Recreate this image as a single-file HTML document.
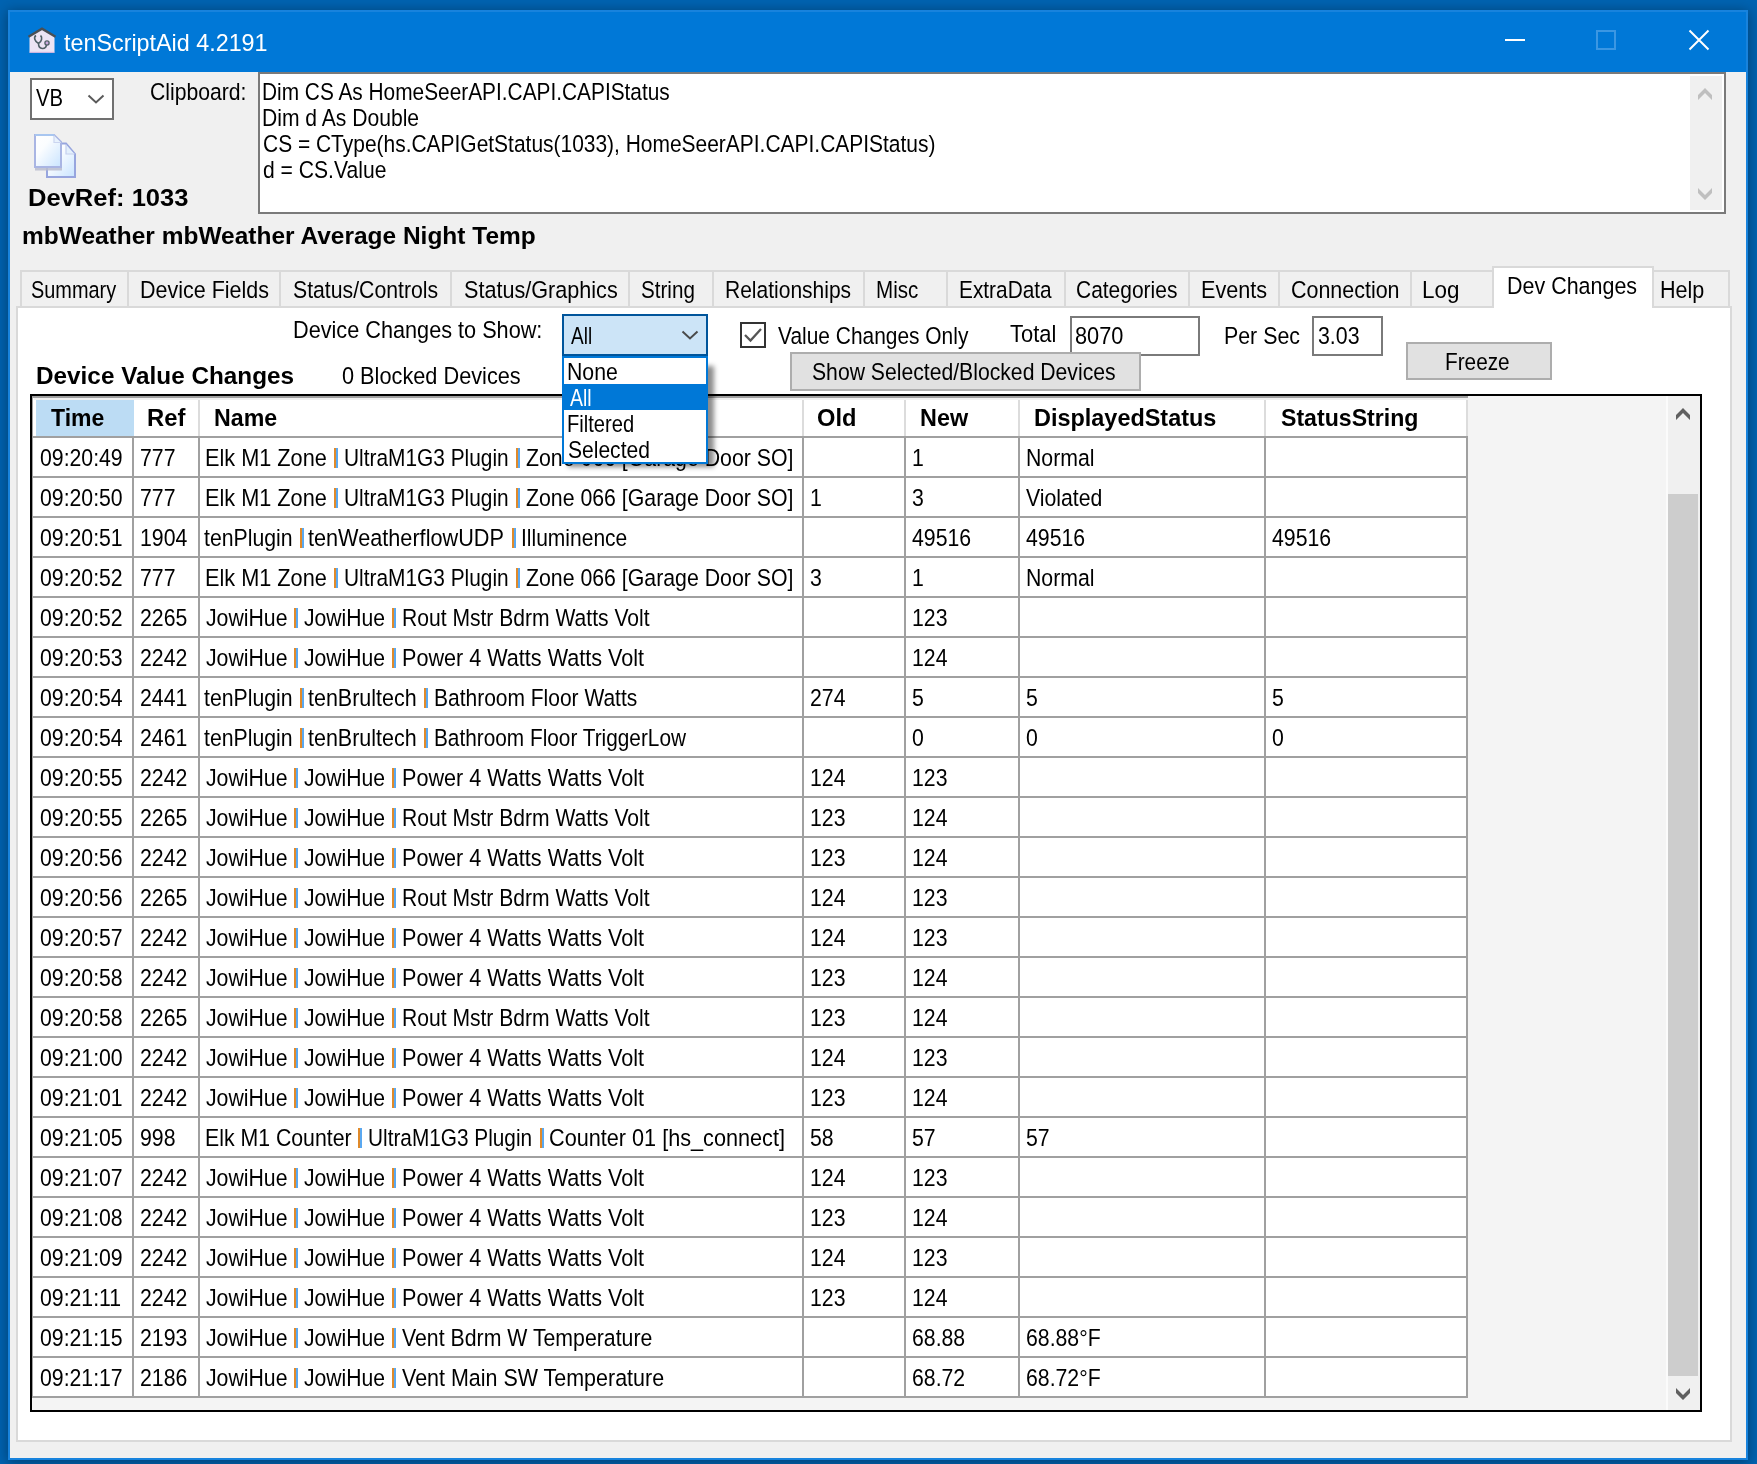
<!DOCTYPE html>
<html><head><meta charset="utf-8"><title>tenScriptAid</title>
<style>
html,body{margin:0;padding:0}
body{width:1757px;height:1464px;overflow:hidden;position:relative;background:#005a9e;font-family:"Liberation Sans",sans-serif;}
div,span,svg{position:absolute;box-sizing:border-box}
.t{white-space:nowrap;font-size:24.5px;line-height:24.5px;transform-origin:0 0;color:#000}
.b{font-weight:bold}
.t i{display:inline-block;position:relative;width:6.7px;height:20px;vertical-align:-2px;background:linear-gradient(90deg,transparent 0,transparent 1.2px,#e08a2a 1.2px,#e08a2a 3.5px,#5aa8f0 3.5px,#5aa8f0 5.8px,transparent 5.8px)}
.pp{width:4px;height:20px;background:linear-gradient(90deg,#e08a2a 0,#e08a2a 2px,#5aa8f0 2px,#5aa8f0 4px)}
.gl{background:#a0a0a0}
.btn{background:#e1e1e1;border:2px solid #adadad}
.tb{background:#fff;border:2px solid #7a7a7a}
.ts{background:#d9d9d9}
</style></head><body>
<!-- desktop shading -->
<div style="left:0;top:0;width:1757px;height:1464px;background:#0063b1"></div>
<!-- window -->
<div style="left:8px;top:10px;width:1740px;height:1450px;background:#0078d7;border:2px solid #1883dd;box-shadow:0 2px 12px 1px rgba(0,0,0,.34)"></div>
<div style="left:10px;top:12px;width:1736px;height:60px;background:#0078d7"></div>
<div style="left:10px;top:72px;width:1736px;height:1386px;background:#f0f0f0"></div>
<!-- title icon -->
<svg style="left:27px;top:27px" width="30" height="27" viewBox="0 0 30 27">
<path d="M2.5 9.5 L15 2 L27.5 9.5 L27.5 25.5 L2.5 25.5 Z" fill="#ece4f4"/>
<path d="M1.5 9.8 L15 1.6 L28.5 9.8" fill="none" stroke="#4a4f54" stroke-width="2.4"/>
<path d="M9 8.5 C6.5 10 7.5 14.5 11.5 16.5 C15 14.5 15.5 10 13.5 8.5 M11.5 16.5 C11.5 23 19 23 19.5 17.5" fill="none" stroke="#4f5f66" stroke-width="1.6"/>
<circle cx="20" cy="16" r="2.1" fill="#c9a8dd" stroke="#4f5f66" stroke-width="1.3"/>
<rect x="2.5" y="24.8" width="25" height="1" fill="#e0b8e0"/>
</svg>
<!-- caption buttons -->
<div style="left:1505px;top:39px;width:20px;height:2px;background:#fff"></div>
<div style="left:1596px;top:30px;width:20px;height:20px;border:2px solid #3b97e3"></div>
<svg style="left:1688px;top:29px" width="22" height="22" viewBox="0 0 22 22"><path d="M1.5 1.5 L20.5 20.5 M20.5 1.5 L1.5 20.5" stroke="#fff" stroke-width="2" fill="none"/></svg>

<!-- VB combo -->
<div class="tb" style="left:30px;top:78px;width:84px;height:42px;border-color:#707070"></div>
<svg style="left:86px;top:93px" width="20" height="12" viewBox="0 0 20 12"><path d="M2.5 2.5 L10 9.5 L17.5 2.5" stroke="#5a5a5a" stroke-width="2" fill="none"/></svg>
<!-- copy icon -->
<svg style="left:32px;top:132px" width="46" height="48" viewBox="0 0 46 48">
<defs><linearGradient id="pg" x1="0" y1="0" x2="1" y2="1"><stop offset="0" stop-color="#ffffff"/><stop offset=".35" stop-color="#fbfdff"/><stop offset="1" stop-color="#c9e4ff"/></linearGradient></defs>
<path d="M15 11.5 H34 L43 22 V45 H15 Z" fill="url(#pg)" stroke="#97a5de" stroke-width="2"/>
<path d="M34 12.5 V22 H42.5" fill="#e4f0fc" stroke="#c5d0ee" stroke-width="1.2"/>
<rect x="3" y="36" width="27" height="2.5" fill="#b9bccf" opacity=".85"/>
<path d="M3 3 H22 L29 10 V35 H3 Z" fill="url(#pg)" stroke="#a9b5e3" stroke-width="2"/>
<path d="M22 3.5 V10.5 H29" fill="#e8f2fd" stroke="#cbd5f0" stroke-width="1.2"/>
<path d="M3 3 H22" stroke="#a8c6f0" stroke-width="2"/>
</svg>
<!-- clipboard textbox -->
<div class="tb" style="left:258px;top:72px;width:1468px;height:142px"></div>
<div style="left:1690px;top:76px;width:32px;height:134px;background:#f0f0f0"></div>
<svg style="left:1698px;top:88px" width="14" height="12" viewBox="0 0 14 12"><path d="M7 0 L14 7 L14 12 L7 5 L0 12 L0 7 Z" fill="#bfbfbf"/></svg>
<svg style="left:1698px;top:188px" width="14" height="12" viewBox="0 0 14 12"><path d="M7 12 L14 5 L14 0 L7 7 L0 0 L0 5 Z" fill="#bfbfbf"/></svg>

<!-- tab page -->
<div style="left:16px;top:306px;width:1716px;height:1136px;background:#fff;border:2px solid #d9d9d9"></div>
<!-- tab strip -->
<div class="ts" style="left:20px;top:270px;width:1472px;height:2px"></div>
<div class="ts" style="left:1654px;top:270px;width:76px;height:2px"></div>
<div class="ts" style="left:20px;top:270px;width:2px;height:36px"></div>
<div class="ts" style="left:127px;top:270px;width:2px;height:36px"></div>
<div class="ts" style="left:279px;top:270px;width:2px;height:36px"></div>
<div class="ts" style="left:450px;top:270px;width:2px;height:36px"></div>
<div class="ts" style="left:628px;top:270px;width:2px;height:36px"></div>
<div class="ts" style="left:712px;top:270px;width:2px;height:36px"></div>
<div class="ts" style="left:863px;top:270px;width:2px;height:36px"></div>
<div class="ts" style="left:946px;top:270px;width:2px;height:36px"></div>
<div class="ts" style="left:1064px;top:270px;width:2px;height:36px"></div>
<div class="ts" style="left:1188px;top:270px;width:2px;height:36px"></div>
<div class="ts" style="left:1278px;top:270px;width:2px;height:36px"></div>
<div class="ts" style="left:1410px;top:270px;width:2px;height:36px"></div>
<div class="ts" style="left:1728px;top:270px;width:2px;height:36px"></div>
<!-- selected tab -->
<div style="left:1492px;top:266px;width:162px;height:42px;background:#fff;border:2px solid #d9d9d9;border-bottom:none"></div>

<!-- combobox (open) -->
<div style="left:562px;top:314px;width:146px;height:42px;background:#cce4f7;border:2px solid #00559b"></div>
<svg style="left:680px;top:329px" width="20" height="12" viewBox="0 0 20 12"><path d="M2.5 2.5 L10 9.5 L17.5 2.5" stroke="#4a4a4a" stroke-width="2" fill="none"/></svg>
<!-- checkbox -->
<div style="left:740px;top:322px;width:26px;height:26px;background:#fff;border:2px solid #333"></div>
<svg style="left:740px;top:322px" width="26" height="26" viewBox="0 0 26 26"><path d="M5 13 L10.5 18.5 L21 7" stroke="#555" stroke-width="2.3" fill="none"/></svg>
<!-- textboxes -->
<div class="tb" style="left:1070px;top:316px;width:130px;height:40px"></div>
<div class="tb" style="left:1312px;top:316px;width:71px;height:40px"></div>
<!-- buttons -->
<div class="btn" style="left:790px;top:352px;width:351px;height:39px"></div>
<div class="btn" style="left:1406px;top:342px;width:146px;height:38px"></div>

<!-- grid -->
<div style="left:30px;top:394px;width:1672px;height:1018px;background:#f4f4f4;border:2px solid #000"></div>
<div style="left:32px;top:396px;width:1436px;height:2px;background:#a0a0a0"></div>
<div style="left:32px;top:396px;width:2px;height:1002px;background:#a0a0a0"></div>
<div style="position:absolute;left:33px;top:398px;width:1434px;height:999px;background:#fff"></div>
<div style="position:absolute;left:34px;top:398px;width:1434px;height:2px;background:#f0f0f0"></div>
<div style="position:absolute;left:132px;top:400px;width:2px;height:36px;background:#dcdcdc"></div>
<div style="position:absolute;left:198px;top:400px;width:2px;height:36px;background:#dcdcdc"></div>
<div style="position:absolute;left:802px;top:400px;width:2px;height:36px;background:#dcdcdc"></div>
<div style="position:absolute;left:904px;top:400px;width:2px;height:36px;background:#dcdcdc"></div>
<div style="position:absolute;left:1018px;top:400px;width:2px;height:36px;background:#dcdcdc"></div>
<div style="position:absolute;left:1264px;top:400px;width:2px;height:36px;background:#dcdcdc"></div>
<div style="position:absolute;left:1466px;top:400px;width:2px;height:36px;background:#dcdcdc"></div>
<div style="position:absolute;left:36px;top:400px;width:98px;height:36px;background:#bcdcf4"></div>
<div class="gl" style="left:33px;top:436px;width:1435px;height:2px"></div>
<div class="gl" style="left:33px;top:476px;width:1435px;height:2px"></div>
<div class="gl" style="left:33px;top:516px;width:1435px;height:2px"></div>
<div class="gl" style="left:33px;top:556px;width:1435px;height:2px"></div>
<div class="gl" style="left:33px;top:596px;width:1435px;height:2px"></div>
<div class="gl" style="left:33px;top:636px;width:1435px;height:2px"></div>
<div class="gl" style="left:33px;top:676px;width:1435px;height:2px"></div>
<div class="gl" style="left:33px;top:716px;width:1435px;height:2px"></div>
<div class="gl" style="left:33px;top:756px;width:1435px;height:2px"></div>
<div class="gl" style="left:33px;top:796px;width:1435px;height:2px"></div>
<div class="gl" style="left:33px;top:836px;width:1435px;height:2px"></div>
<div class="gl" style="left:33px;top:876px;width:1435px;height:2px"></div>
<div class="gl" style="left:33px;top:916px;width:1435px;height:2px"></div>
<div class="gl" style="left:33px;top:956px;width:1435px;height:2px"></div>
<div class="gl" style="left:33px;top:996px;width:1435px;height:2px"></div>
<div class="gl" style="left:33px;top:1036px;width:1435px;height:2px"></div>
<div class="gl" style="left:33px;top:1076px;width:1435px;height:2px"></div>
<div class="gl" style="left:33px;top:1116px;width:1435px;height:2px"></div>
<div class="gl" style="left:33px;top:1156px;width:1435px;height:2px"></div>
<div class="gl" style="left:33px;top:1196px;width:1435px;height:2px"></div>
<div class="gl" style="left:33px;top:1236px;width:1435px;height:2px"></div>
<div class="gl" style="left:33px;top:1276px;width:1435px;height:2px"></div>
<div class="gl" style="left:33px;top:1316px;width:1435px;height:2px"></div>
<div class="gl" style="left:33px;top:1356px;width:1435px;height:2px"></div>
<div class="gl" style="left:33px;top:1396px;width:1435px;height:2px"></div>
<div class="gl" style="left:132px;top:436px;width:2px;height:962px"></div>
<div class="gl" style="left:198px;top:436px;width:2px;height:962px"></div>
<div class="gl" style="left:802px;top:436px;width:2px;height:962px"></div>
<div class="gl" style="left:904px;top:436px;width:2px;height:962px"></div>
<div class="gl" style="left:1018px;top:436px;width:2px;height:962px"></div>
<div class="gl" style="left:1264px;top:436px;width:2px;height:962px"></div>
<div class="gl" style="left:1466px;top:436px;width:2px;height:962px"></div>
<!-- grid scrollbar -->
<div style="left:1666px;top:396px;width:2px;height:1014px;background:#fbfbfb"></div>
<div style="left:1668px;top:396px;width:32px;height:1014px;background:#f0f0f0"></div>
<div style="left:1668px;top:494px;width:30px;height:882px;background:#cdcdcd"></div>
<svg style="left:1676px;top:408px" width="14" height="12" viewBox="0 0 14 12"><path d="M7 0 L14 7 L14 12 L7 5 L0 12 L0 7 Z" fill="#606060"/></svg>
<svg style="left:1676px;top:1388px" width="14" height="12" viewBox="0 0 14 12"><path d="M7 12 L14 5 L14 0 L7 7 L0 0 L0 5 Z" fill="#606060"/></svg>

<span class="t" style="left:63.80px;top:31.08px;transform:scaleX(0.9717);color:#fff;font-size:24px;line-height:24px;">tenScriptAid 4.2191</span>
<span class="t" style="left:35.75px;top:85.86px;transform:scaleX(0.8271);">VB</span>
<span class="t" style="left:150.14px;top:79.86px;transform:scaleX(0.8634);">Clipboard:</span>
<span class="t" style="left:262.30px;top:79.86px;transform:scaleX(0.8508);">Dim CS As HomeSeerAPI.CAPI.CAPIStatus</span>
<span class="t" style="left:262.28px;top:105.86px;transform:scaleX(0.8609);">Dim d As Double</span>
<span class="t" style="left:263.14px;top:131.86px;transform:scaleX(0.8551);">CS = CType(hs.CAPIGetStatus(1033), HomeSeerAPI.CAPI.CAPIStatus)</span>
<span class="t" style="left:263.14px;top:157.86px;transform:scaleX(0.8615);">d = CS.Value</span>
<span class="t b" style="left:27.66px;top:185.86px;transform:scaleX(1.0429);">DevRef: 1033</span>
<span class="t b" style="left:22.30px;top:223.86px;transform:scaleX(0.9992);">mbWeather mbWeather Average Night Temp</span>
<span class="t" style="left:31.19px;top:277.86px;transform:scaleX(0.8129);">Summary</span>
<span class="t" style="left:140.25px;top:277.86px;transform:scaleX(0.8771);">Device Fields</span>
<span class="t" style="left:293.13px;top:277.86px;transform:scaleX(0.8662);">Status/Controls</span>
<span class="t" style="left:463.52px;top:277.86px;transform:scaleX(0.8818);">Status/Graphics</span>
<span class="t" style="left:641.16px;top:277.86px;transform:scaleX(0.8417);">String</span>
<span class="t" style="left:725.08px;top:277.86px;transform:scaleX(0.8575);">Relationships</span>
<span class="t" style="left:875.92px;top:277.86px;transform:scaleX(0.8399);">Misc</span>
<span class="t" style="left:959.00px;top:277.86px;transform:scaleX(0.8508);">ExtraData</span>
<span class="t" style="left:1076.14px;top:277.86px;transform:scaleX(0.8556);">Categories</span>
<span class="t" style="left:1200.53px;top:277.86px;transform:scaleX(0.8837);">Events</span>
<span class="t" style="left:1290.62px;top:277.86px;transform:scaleX(0.8756);">Connection</span>
<span class="t" style="left:1422.17px;top:277.86px;transform:scaleX(0.9150);">Log</span>
<span class="t" style="left:1660.24px;top:277.86px;transform:scaleX(0.8794);">Help</span>
<span class="t" style="left:1506.95px;top:273.86px;transform:scaleX(0.8762);">Dev Changes</span>
<span class="t" style="left:293.23px;top:317.86px;transform:scaleX(0.8846);">Device Changes to Show:</span>
<span class="t" style="left:570.50px;top:323.86px;transform:scaleX(0.7757);">All</span>
<span class="t" style="left:778.00px;top:323.86px;transform:scaleX(0.8540);">Value Changes Only</span>
<span class="t" style="left:1010.00px;top:321.86px;transform:scaleX(0.8945);">Total</span>
<span class="t" style="left:1075.11px;top:323.86px;transform:scaleX(0.8889);">8070</span>
<span class="t" style="left:1224.26px;top:323.86px;transform:scaleX(0.8716);">Per Sec</span>
<span class="t" style="left:1318.00px;top:323.86px;transform:scaleX(0.8713);">3.03</span>
<span class="t" style="left:811.64px;top:359.86px;transform:scaleX(0.8640);">Show Selected/Blocked Devices</span>
<span class="t" style="left:1444.60px;top:349.86px;transform:scaleX(0.8475);">Freeze</span>
<span class="t" style="left:342.00px;top:363.86px;transform:scaleX(0.8868);">0 Blocked Devices</span>
<span class="t b" style="left:36.01px;top:363.86px;transform:scaleX(0.9924);">Device Value Changes</span>
<span class="t b" style="left:51.30px;top:405.86px;transform:scaleX(0.9392);">Time</span>
<span class="t b" style="left:147.43px;top:405.86px;transform:scaleX(0.9715);">Ref</span>
<span class="t b" style="left:214.45px;top:405.86px;transform:scaleX(0.9462);">Name</span>
<span class="t b" style="left:816.54px;top:405.86px;transform:scaleX(0.9649);">Old</span>
<span class="t b" style="left:920.05px;top:405.86px;transform:scaleX(0.9539);">New</span>
<span class="t b" style="left:1034.04px;top:405.86px;transform:scaleX(0.9567);">DisplayedStatus</span>
<span class="t b" style="left:1280.50px;top:405.86px;transform:scaleX(0.9434);">StatusString</span>
<span class="t" style="left:40.00px;top:445.86px;transform:scaleX(0.8670);">09:20:49</span>
<span class="t" style="left:139.50px;top:445.86px;transform:scaleX(0.8670);">777</span>
<span class="t" style="left:205.23px;top:445.86px;transform:scaleX(0.8858);">Elk M1 Zone</span>
<span class="t" style="left:344.35px;top:445.86px;transform:scaleX(0.8517);">UltraM1G3 Plugin</span>
<span class="t" style="left:526.30px;top:445.86px;transform:scaleX(0.8688);">Zone 066 [Garage Door SO]</span>
<span class="t" style="left:911.50px;top:445.86px;transform:scaleX(0.8670);">1</span>
<span class="t" style="left:1025.50px;top:445.86px;transform:scaleX(0.8670);">Normal</span>
<span class="t" style="left:40.00px;top:485.86px;transform:scaleX(0.8670);">09:20:50</span>
<span class="t" style="left:139.50px;top:485.86px;transform:scaleX(0.8670);">777</span>
<span class="t" style="left:205.23px;top:485.86px;transform:scaleX(0.8858);">Elk M1 Zone</span>
<span class="t" style="left:344.35px;top:485.86px;transform:scaleX(0.8517);">UltraM1G3 Plugin</span>
<span class="t" style="left:526.30px;top:485.86px;transform:scaleX(0.8688);">Zone 066 [Garage Door SO]</span>
<span class="t" style="left:809.50px;top:485.86px;transform:scaleX(0.8670);">1</span>
<span class="t" style="left:911.50px;top:485.86px;transform:scaleX(0.8670);">3</span>
<span class="t" style="left:1025.50px;top:485.86px;transform:scaleX(0.8670);">Violated</span>
<span class="t" style="left:40.00px;top:525.86px;transform:scaleX(0.8670);">09:20:51</span>
<span class="t" style="left:139.50px;top:525.86px;transform:scaleX(0.8670);">1904</span>
<span class="t" style="left:204.20px;top:525.86px;transform:scaleX(0.8667);">tenPlugin</span>
<span class="t" style="left:307.80px;top:525.86px;transform:scaleX(0.8844);">tenWeatherflowUDP</span>
<span class="t" style="left:520.79px;top:525.86px;transform:scaleX(0.8574);">Illuminence</span>
<span class="t" style="left:911.50px;top:525.86px;transform:scaleX(0.8670);">49516</span>
<span class="t" style="left:1025.50px;top:525.86px;transform:scaleX(0.8670);">49516</span>
<span class="t" style="left:1271.50px;top:525.86px;transform:scaleX(0.8670);">49516</span>
<span class="t" style="left:40.00px;top:565.86px;transform:scaleX(0.8670);">09:20:52</span>
<span class="t" style="left:139.50px;top:565.86px;transform:scaleX(0.8670);">777</span>
<span class="t" style="left:205.23px;top:565.86px;transform:scaleX(0.8858);">Elk M1 Zone</span>
<span class="t" style="left:344.35px;top:565.86px;transform:scaleX(0.8517);">UltraM1G3 Plugin</span>
<span class="t" style="left:526.30px;top:565.86px;transform:scaleX(0.8688);">Zone 066 [Garage Door SO]</span>
<span class="t" style="left:809.50px;top:565.86px;transform:scaleX(0.8670);">3</span>
<span class="t" style="left:911.50px;top:565.86px;transform:scaleX(0.8670);">1</span>
<span class="t" style="left:1025.50px;top:565.86px;transform:scaleX(0.8670);">Normal</span>
<span class="t" style="left:40.00px;top:605.86px;transform:scaleX(0.8670);">09:20:52</span>
<span class="t" style="left:139.50px;top:605.86px;transform:scaleX(0.8670);">2265</span>
<span class="t" style="left:205.50px;top:605.86px;transform:scaleX(0.8668);">JowiHue</span>
<span class="t" style="left:303.50px;top:605.86px;transform:scaleX(0.8625);">JowiHue</span>
<span class="t" style="left:402.48px;top:605.86px;transform:scaleX(0.8604);">Rout Mstr Bdrm Watts Volt</span>
<span class="t" style="left:911.50px;top:605.86px;transform:scaleX(0.8670);">123</span>
<span class="t" style="left:40.00px;top:645.86px;transform:scaleX(0.8670);">09:20:53</span>
<span class="t" style="left:139.50px;top:645.86px;transform:scaleX(0.8670);">2242</span>
<span class="t" style="left:205.50px;top:645.86px;transform:scaleX(0.8668);">JowiHue</span>
<span class="t" style="left:303.50px;top:645.86px;transform:scaleX(0.8625);">JowiHue</span>
<span class="t" style="left:401.74px;top:645.86px;transform:scaleX(0.8817);">Power 4 Watts Watts Volt</span>
<span class="t" style="left:911.50px;top:645.86px;transform:scaleX(0.8670);">124</span>
<span class="t" style="left:40.00px;top:685.86px;transform:scaleX(0.8670);">09:20:54</span>
<span class="t" style="left:139.50px;top:685.86px;transform:scaleX(0.8670);">2441</span>
<span class="t" style="left:204.20px;top:685.86px;transform:scaleX(0.8667);">tenPlugin</span>
<span class="t" style="left:307.80px;top:685.86px;transform:scaleX(0.8767);">tenBrultech</span>
<span class="t" style="left:433.99px;top:685.86px;transform:scaleX(0.8562);">Bathroom Floor Watts</span>
<span class="t" style="left:809.50px;top:685.86px;transform:scaleX(0.8670);">274</span>
<span class="t" style="left:911.50px;top:685.86px;transform:scaleX(0.8670);">5</span>
<span class="t" style="left:1025.50px;top:685.86px;transform:scaleX(0.8670);">5</span>
<span class="t" style="left:1271.50px;top:685.86px;transform:scaleX(0.8670);">5</span>
<span class="t" style="left:40.00px;top:725.86px;transform:scaleX(0.8670);">09:20:54</span>
<span class="t" style="left:139.50px;top:725.86px;transform:scaleX(0.8670);">2461</span>
<span class="t" style="left:204.20px;top:725.86px;transform:scaleX(0.8667);">tenPlugin</span>
<span class="t" style="left:307.80px;top:725.86px;transform:scaleX(0.8767);">tenBrultech</span>
<span class="t" style="left:434.00px;top:725.86px;transform:scaleX(0.8488);">Bathroom Floor TriggerLow</span>
<span class="t" style="left:911.50px;top:725.86px;transform:scaleX(0.8670);">0</span>
<span class="t" style="left:1025.50px;top:725.86px;transform:scaleX(0.8670);">0</span>
<span class="t" style="left:1271.50px;top:725.86px;transform:scaleX(0.8670);">0</span>
<span class="t" style="left:40.00px;top:765.86px;transform:scaleX(0.8670);">09:20:55</span>
<span class="t" style="left:139.50px;top:765.86px;transform:scaleX(0.8670);">2242</span>
<span class="t" style="left:205.50px;top:765.86px;transform:scaleX(0.8668);">JowiHue</span>
<span class="t" style="left:303.50px;top:765.86px;transform:scaleX(0.8625);">JowiHue</span>
<span class="t" style="left:401.74px;top:765.86px;transform:scaleX(0.8817);">Power 4 Watts Watts Volt</span>
<span class="t" style="left:809.50px;top:765.86px;transform:scaleX(0.8670);">124</span>
<span class="t" style="left:911.50px;top:765.86px;transform:scaleX(0.8670);">123</span>
<span class="t" style="left:40.00px;top:805.86px;transform:scaleX(0.8670);">09:20:55</span>
<span class="t" style="left:139.50px;top:805.86px;transform:scaleX(0.8670);">2265</span>
<span class="t" style="left:205.50px;top:805.86px;transform:scaleX(0.8668);">JowiHue</span>
<span class="t" style="left:303.50px;top:805.86px;transform:scaleX(0.8625);">JowiHue</span>
<span class="t" style="left:402.48px;top:805.86px;transform:scaleX(0.8604);">Rout Mstr Bdrm Watts Volt</span>
<span class="t" style="left:809.50px;top:805.86px;transform:scaleX(0.8670);">123</span>
<span class="t" style="left:911.50px;top:805.86px;transform:scaleX(0.8670);">124</span>
<span class="t" style="left:40.00px;top:845.86px;transform:scaleX(0.8670);">09:20:56</span>
<span class="t" style="left:139.50px;top:845.86px;transform:scaleX(0.8670);">2242</span>
<span class="t" style="left:205.50px;top:845.86px;transform:scaleX(0.8668);">JowiHue</span>
<span class="t" style="left:303.50px;top:845.86px;transform:scaleX(0.8625);">JowiHue</span>
<span class="t" style="left:401.74px;top:845.86px;transform:scaleX(0.8817);">Power 4 Watts Watts Volt</span>
<span class="t" style="left:809.50px;top:845.86px;transform:scaleX(0.8670);">123</span>
<span class="t" style="left:911.50px;top:845.86px;transform:scaleX(0.8670);">124</span>
<span class="t" style="left:40.00px;top:885.86px;transform:scaleX(0.8670);">09:20:56</span>
<span class="t" style="left:139.50px;top:885.86px;transform:scaleX(0.8670);">2265</span>
<span class="t" style="left:205.50px;top:885.86px;transform:scaleX(0.8668);">JowiHue</span>
<span class="t" style="left:303.50px;top:885.86px;transform:scaleX(0.8625);">JowiHue</span>
<span class="t" style="left:402.48px;top:885.86px;transform:scaleX(0.8604);">Rout Mstr Bdrm Watts Volt</span>
<span class="t" style="left:809.50px;top:885.86px;transform:scaleX(0.8670);">124</span>
<span class="t" style="left:911.50px;top:885.86px;transform:scaleX(0.8670);">123</span>
<span class="t" style="left:40.00px;top:925.86px;transform:scaleX(0.8670);">09:20:57</span>
<span class="t" style="left:139.50px;top:925.86px;transform:scaleX(0.8670);">2242</span>
<span class="t" style="left:205.50px;top:925.86px;transform:scaleX(0.8668);">JowiHue</span>
<span class="t" style="left:303.50px;top:925.86px;transform:scaleX(0.8625);">JowiHue</span>
<span class="t" style="left:401.74px;top:925.86px;transform:scaleX(0.8817);">Power 4 Watts Watts Volt</span>
<span class="t" style="left:809.50px;top:925.86px;transform:scaleX(0.8670);">124</span>
<span class="t" style="left:911.50px;top:925.86px;transform:scaleX(0.8670);">123</span>
<span class="t" style="left:40.00px;top:965.86px;transform:scaleX(0.8670);">09:20:58</span>
<span class="t" style="left:139.50px;top:965.86px;transform:scaleX(0.8670);">2242</span>
<span class="t" style="left:205.50px;top:965.86px;transform:scaleX(0.8668);">JowiHue</span>
<span class="t" style="left:303.50px;top:965.86px;transform:scaleX(0.8625);">JowiHue</span>
<span class="t" style="left:401.74px;top:965.86px;transform:scaleX(0.8817);">Power 4 Watts Watts Volt</span>
<span class="t" style="left:809.50px;top:965.86px;transform:scaleX(0.8670);">123</span>
<span class="t" style="left:911.50px;top:965.86px;transform:scaleX(0.8670);">124</span>
<span class="t" style="left:40.00px;top:1005.86px;transform:scaleX(0.8670);">09:20:58</span>
<span class="t" style="left:139.50px;top:1005.86px;transform:scaleX(0.8670);">2265</span>
<span class="t" style="left:205.50px;top:1005.86px;transform:scaleX(0.8668);">JowiHue</span>
<span class="t" style="left:303.50px;top:1005.86px;transform:scaleX(0.8625);">JowiHue</span>
<span class="t" style="left:402.48px;top:1005.86px;transform:scaleX(0.8604);">Rout Mstr Bdrm Watts Volt</span>
<span class="t" style="left:809.50px;top:1005.86px;transform:scaleX(0.8670);">123</span>
<span class="t" style="left:911.50px;top:1005.86px;transform:scaleX(0.8670);">124</span>
<span class="t" style="left:40.00px;top:1045.86px;transform:scaleX(0.8670);">09:21:00</span>
<span class="t" style="left:139.50px;top:1045.86px;transform:scaleX(0.8670);">2242</span>
<span class="t" style="left:205.50px;top:1045.86px;transform:scaleX(0.8668);">JowiHue</span>
<span class="t" style="left:303.50px;top:1045.86px;transform:scaleX(0.8625);">JowiHue</span>
<span class="t" style="left:401.74px;top:1045.86px;transform:scaleX(0.8817);">Power 4 Watts Watts Volt</span>
<span class="t" style="left:809.50px;top:1045.86px;transform:scaleX(0.8670);">124</span>
<span class="t" style="left:911.50px;top:1045.86px;transform:scaleX(0.8670);">123</span>
<span class="t" style="left:40.00px;top:1085.86px;transform:scaleX(0.8670);">09:21:01</span>
<span class="t" style="left:139.50px;top:1085.86px;transform:scaleX(0.8670);">2242</span>
<span class="t" style="left:205.50px;top:1085.86px;transform:scaleX(0.8668);">JowiHue</span>
<span class="t" style="left:303.50px;top:1085.86px;transform:scaleX(0.8625);">JowiHue</span>
<span class="t" style="left:401.74px;top:1085.86px;transform:scaleX(0.8817);">Power 4 Watts Watts Volt</span>
<span class="t" style="left:809.50px;top:1085.86px;transform:scaleX(0.8670);">123</span>
<span class="t" style="left:911.50px;top:1085.86px;transform:scaleX(0.8670);">124</span>
<span class="t" style="left:40.00px;top:1125.86px;transform:scaleX(0.8670);">09:21:05</span>
<span class="t" style="left:139.50px;top:1125.86px;transform:scaleX(0.8670);">998</span>
<span class="t" style="left:205.26px;top:1125.86px;transform:scaleX(0.8681);">Elk M1 Counter</span>
<span class="t" style="left:368.35px;top:1125.86px;transform:scaleX(0.8486);">UltraM1G3 Plugin</span>
<span class="t" style="left:548.72px;top:1125.86px;transform:scaleX(0.8840);">Counter 01 [hs_connect]</span>
<span class="t" style="left:809.50px;top:1125.86px;transform:scaleX(0.8670);">58</span>
<span class="t" style="left:911.50px;top:1125.86px;transform:scaleX(0.8670);">57</span>
<span class="t" style="left:1025.50px;top:1125.86px;transform:scaleX(0.8670);">57</span>
<span class="t" style="left:40.00px;top:1165.86px;transform:scaleX(0.8670);">09:21:07</span>
<span class="t" style="left:139.50px;top:1165.86px;transform:scaleX(0.8670);">2242</span>
<span class="t" style="left:205.50px;top:1165.86px;transform:scaleX(0.8668);">JowiHue</span>
<span class="t" style="left:303.50px;top:1165.86px;transform:scaleX(0.8625);">JowiHue</span>
<span class="t" style="left:401.74px;top:1165.86px;transform:scaleX(0.8817);">Power 4 Watts Watts Volt</span>
<span class="t" style="left:809.50px;top:1165.86px;transform:scaleX(0.8670);">124</span>
<span class="t" style="left:911.50px;top:1165.86px;transform:scaleX(0.8670);">123</span>
<span class="t" style="left:40.00px;top:1205.86px;transform:scaleX(0.8670);">09:21:08</span>
<span class="t" style="left:139.50px;top:1205.86px;transform:scaleX(0.8670);">2242</span>
<span class="t" style="left:205.50px;top:1205.86px;transform:scaleX(0.8668);">JowiHue</span>
<span class="t" style="left:303.50px;top:1205.86px;transform:scaleX(0.8625);">JowiHue</span>
<span class="t" style="left:401.74px;top:1205.86px;transform:scaleX(0.8817);">Power 4 Watts Watts Volt</span>
<span class="t" style="left:809.50px;top:1205.86px;transform:scaleX(0.8670);">123</span>
<span class="t" style="left:911.50px;top:1205.86px;transform:scaleX(0.8670);">124</span>
<span class="t" style="left:40.00px;top:1245.86px;transform:scaleX(0.8670);">09:21:09</span>
<span class="t" style="left:139.50px;top:1245.86px;transform:scaleX(0.8670);">2242</span>
<span class="t" style="left:205.50px;top:1245.86px;transform:scaleX(0.8668);">JowiHue</span>
<span class="t" style="left:303.50px;top:1245.86px;transform:scaleX(0.8625);">JowiHue</span>
<span class="t" style="left:401.74px;top:1245.86px;transform:scaleX(0.8817);">Power 4 Watts Watts Volt</span>
<span class="t" style="left:809.50px;top:1245.86px;transform:scaleX(0.8670);">124</span>
<span class="t" style="left:911.50px;top:1245.86px;transform:scaleX(0.8670);">123</span>
<span class="t" style="left:40.00px;top:1285.86px;transform:scaleX(0.8670);">09:21:11</span>
<span class="t" style="left:139.50px;top:1285.86px;transform:scaleX(0.8670);">2242</span>
<span class="t" style="left:205.50px;top:1285.86px;transform:scaleX(0.8668);">JowiHue</span>
<span class="t" style="left:303.50px;top:1285.86px;transform:scaleX(0.8625);">JowiHue</span>
<span class="t" style="left:401.74px;top:1285.86px;transform:scaleX(0.8817);">Power 4 Watts Watts Volt</span>
<span class="t" style="left:809.50px;top:1285.86px;transform:scaleX(0.8670);">123</span>
<span class="t" style="left:911.50px;top:1285.86px;transform:scaleX(0.8670);">124</span>
<span class="t" style="left:40.00px;top:1325.86px;transform:scaleX(0.8670);">09:21:15</span>
<span class="t" style="left:139.50px;top:1325.86px;transform:scaleX(0.8670);">2193</span>
<span class="t" style="left:205.50px;top:1325.86px;transform:scaleX(0.8668);">JowiHue</span>
<span class="t" style="left:303.50px;top:1325.86px;transform:scaleX(0.8625);">JowiHue</span>
<span class="t" style="left:402.30px;top:1325.86px;transform:scaleX(0.8686);">Vent Bdrm W Temperature</span>
<span class="t" style="left:911.50px;top:1325.86px;transform:scaleX(0.8670);">68.88</span>
<span class="t" style="left:1025.50px;top:1325.86px;transform:scaleX(0.8670);">68.88°F</span>
<span class="t" style="left:40.00px;top:1365.86px;transform:scaleX(0.8670);">09:21:17</span>
<span class="t" style="left:139.50px;top:1365.86px;transform:scaleX(0.8670);">2186</span>
<span class="t" style="left:205.50px;top:1365.86px;transform:scaleX(0.8668);">JowiHue</span>
<span class="t" style="left:303.50px;top:1365.86px;transform:scaleX(0.8625);">JowiHue</span>
<span class="t" style="left:402.30px;top:1365.86px;transform:scaleX(0.8761);">Vent Main SW Temperature</span>
<span class="t" style="left:911.50px;top:1365.86px;transform:scaleX(0.8670);">68.72</span>
<span class="t" style="left:1025.50px;top:1365.86px;transform:scaleX(0.8670);">68.72°F</span>
<div class="pp" style="left:334px;top:448px"></div>
<div class="pp" style="left:516px;top:448px"></div>
<div class="pp" style="left:334px;top:488px"></div>
<div class="pp" style="left:516px;top:488px"></div>
<div class="pp" style="left:300px;top:528px"></div>
<div class="pp" style="left:512px;top:528px"></div>
<div class="pp" style="left:334px;top:568px"></div>
<div class="pp" style="left:516px;top:568px"></div>
<div class="pp" style="left:294px;top:608px"></div>
<div class="pp" style="left:392px;top:608px"></div>
<div class="pp" style="left:294px;top:648px"></div>
<div class="pp" style="left:392px;top:648px"></div>
<div class="pp" style="left:300px;top:688px"></div>
<div class="pp" style="left:424px;top:688px"></div>
<div class="pp" style="left:300px;top:728px"></div>
<div class="pp" style="left:424px;top:728px"></div>
<div class="pp" style="left:294px;top:768px"></div>
<div class="pp" style="left:392px;top:768px"></div>
<div class="pp" style="left:294px;top:808px"></div>
<div class="pp" style="left:392px;top:808px"></div>
<div class="pp" style="left:294px;top:848px"></div>
<div class="pp" style="left:392px;top:848px"></div>
<div class="pp" style="left:294px;top:888px"></div>
<div class="pp" style="left:392px;top:888px"></div>
<div class="pp" style="left:294px;top:928px"></div>
<div class="pp" style="left:392px;top:928px"></div>
<div class="pp" style="left:294px;top:968px"></div>
<div class="pp" style="left:392px;top:968px"></div>
<div class="pp" style="left:294px;top:1008px"></div>
<div class="pp" style="left:392px;top:1008px"></div>
<div class="pp" style="left:294px;top:1048px"></div>
<div class="pp" style="left:392px;top:1048px"></div>
<div class="pp" style="left:294px;top:1088px"></div>
<div class="pp" style="left:392px;top:1088px"></div>
<div class="pp" style="left:358px;top:1128px"></div>
<div class="pp" style="left:540px;top:1128px"></div>
<div class="pp" style="left:294px;top:1168px"></div>
<div class="pp" style="left:392px;top:1168px"></div>
<div class="pp" style="left:294px;top:1208px"></div>
<div class="pp" style="left:392px;top:1208px"></div>
<div class="pp" style="left:294px;top:1248px"></div>
<div class="pp" style="left:392px;top:1248px"></div>
<div class="pp" style="left:294px;top:1288px"></div>
<div class="pp" style="left:392px;top:1288px"></div>
<div class="pp" style="left:294px;top:1328px"></div>
<div class="pp" style="left:392px;top:1328px"></div>
<div class="pp" style="left:294px;top:1368px"></div>
<div class="pp" style="left:392px;top:1368px"></div>

<!-- dropdown list -->
<div style="left:568px;top:366px;width:146px;height:101px;background:rgba(0,0,0,.45);filter:blur(2.5px)"></div>
<div style="left:562px;top:356px;width:146px;height:108px;background:#fff;border:2px solid #0078d7"></div>
<div style="left:564px;top:384px;width:142px;height:26px;background:#0078d7"></div>
<span class="t" style="left:567.27px;top:359.86px;transform:scaleX(0.8669);">None</span>
<span class="t" style="left:569.50px;top:385.86px;transform:scaleX(0.7951);color:#fff;">All</span>
<span class="t" style="left:567.36px;top:411.86px;transform:scaleX(0.8221);">Filtered</span>
<span class="t" style="left:568.14px;top:437.86px;transform:scaleX(0.8590);">Selected</span>
</body></html>
